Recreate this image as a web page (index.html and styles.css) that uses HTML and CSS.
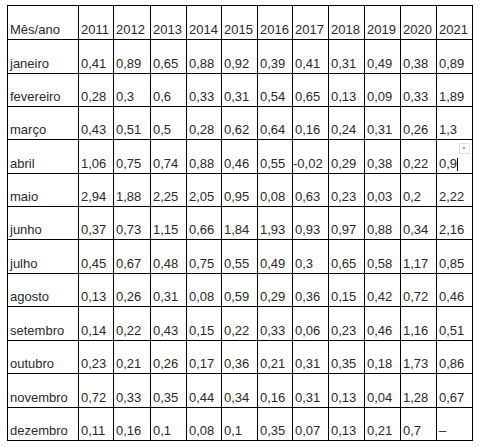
FILE: index.html
```html
<!DOCTYPE html>
<html lang="pt">
<head>
<meta charset="utf-8">
<title>Tabela mensal</title>
<link rel="stylesheet" href="styles.css">
</head>
<body>
<table class="grid">
<colgroup>
<col class="c-month"><col class="c-35"><col class="c-37"><col class="c-36"><col class="c-35"><col class="c-36"><col class="c-35"><col class="c-36"><col class="c-36"><col class="c-36"><col class="c-36"><col class="c-36">
</colgroup>
<tbody>
<tr class="r34"><td>Mês/ano</td><td>2011</td><td>2012</td><td>2013</td><td>2014</td><td>2015</td><td>2016</td><td>2017</td><td>2018</td><td>2019</td><td>2020</td><td>2021</td></tr>
<tr class="r34"><td>janeiro</td><td>0,41</td><td>0,89</td><td>0,65</td><td>0,88</td><td>0,92</td><td>0,39</td><td>0,41</td><td>0,31</td><td>0,49</td><td>0,38</td><td>0,89</td></tr>
<tr class="r33"><td>fevereiro</td><td>0,28</td><td>0,3</td><td>0,6</td><td>0,33</td><td>0,31</td><td>0,54</td><td>0,65</td><td>0,13</td><td>0,09</td><td>0,33</td><td>1,89</td></tr>
<tr class="r33"><td>março</td><td>0,43</td><td>0,51</td><td>0,5</td><td>0,28</td><td>0,62</td><td>0,64</td><td>0,16</td><td>0,24</td><td>0,31</td><td>0,26</td><td>1,3</td></tr>
<tr class="r34"><td>abril</td><td>1,06</td><td>0,75</td><td>0,74</td><td>0,88</td><td>0,46</td><td>0,55</td><td class="tight">-0,02</td><td>0,29</td><td>0,38</td><td>0,22</td><td class="active">0,9<span class="caret"></span><span class="drop"></span></td></tr>
<tr class="r33"><td>maio</td><td>2,94</td><td>1,88</td><td>2,25</td><td>2,05</td><td>0,95</td><td>0,08</td><td>0,63</td><td>0,23</td><td>0,03</td><td>0,2</td><td>2,22</td></tr>
<tr class="r33"><td>junho</td><td>0,37</td><td>0,73</td><td>1,15</td><td>0,66</td><td>1,84</td><td>1,93</td><td>0,93</td><td>0,97</td><td>0,88</td><td>0,34</td><td>2,16</td></tr>
<tr class="r34"><td>julho</td><td>0,45</td><td>0,67</td><td>0,48</td><td>0,75</td><td>0,55</td><td>0,49</td><td>0,3</td><td>0,65</td><td>0,58</td><td>1,17</td><td>0,85</td></tr>
<tr class="r33"><td>agosto</td><td>0,13</td><td>0,26</td><td>0,31</td><td>0,08</td><td>0,59</td><td>0,29</td><td>0,36</td><td>0,15</td><td>0,42</td><td>0,72</td><td>0,46</td></tr>
<tr class="r34"><td>setembro</td><td>0,14</td><td>0,22</td><td>0,43</td><td>0,15</td><td>0,22</td><td>0,33</td><td>0,06</td><td>0,23</td><td>0,46</td><td>1,16</td><td>0,51</td></tr>
<tr class="r33"><td>outubro</td><td>0,23</td><td>0,21</td><td>0,26</td><td>0,17</td><td>0,36</td><td>0,21</td><td>0,31</td><td>0,35</td><td>0,18</td><td>1,73</td><td>0,86</td></tr>
<tr class="r34"><td>novembro</td><td>0,72</td><td>0,33</td><td>0,35</td><td>0,44</td><td>0,34</td><td>0,16</td><td>0,31</td><td>0,13</td><td>0,04</td><td>1,28</td><td>0,67</td></tr>
<tr class="r33"><td>dezembro</td><td>0,11</td><td>0,16</td><td>0,1</td><td>0,08</td><td>0,1</td><td>0,35</td><td>0,07</td><td>0,13</td><td>0,21</td><td>0,7</td><td>–</td></tr>
</tbody>
</table>
</body>
</html>
```

FILE: styles.css
```css
html, body {
  margin: 0;
  padding: 0;
  background: #ffffff;
}

body {
  padding: 5px 0 0 7px;
  font-family: "Liberation Sans", Arial, sans-serif;
  font-size: 13px;
  color: #2a2a2a;
}

.grid {
  border-collapse: collapse;
  table-layout: fixed;
  width: 466px;
}

.c-month { width: 71px; }
.c-35 { width: 35px; }
.c-36 { width: 36px; }
.c-37 { width: 37px; }

.grid tr.r34 { height: 34px; }
.grid tr.r33 { height: 33px; }

.grid td {
  border: 1px solid #000000;
  padding: 0 0 2px 2px;
  vertical-align: bottom;
  white-space: nowrap;
  overflow: visible;
  line-height: 15px;
}

.grid td.tight {
  padding-left: 0;
}

.grid td.active {
  position: relative;
}

.caret {
  display: inline-block;
  width: 1px;
  height: 13px;
  background: #000000;
  vertical-align: -3px;
}

.drop {
  position: absolute;
  top: 3px;
  right: 2px;
  width: 9px;
  height: 9px;
  border: 1px solid #e2e2e2;
  background: #ffffff;
}

.drop::after {
  content: "";
  position: absolute;
  left: 2px;
  top: 3px;
  border-left: 2.5px solid transparent;
  border-right: 2.5px solid transparent;
  border-top: 3px solid #b0b0b0;
}
```
